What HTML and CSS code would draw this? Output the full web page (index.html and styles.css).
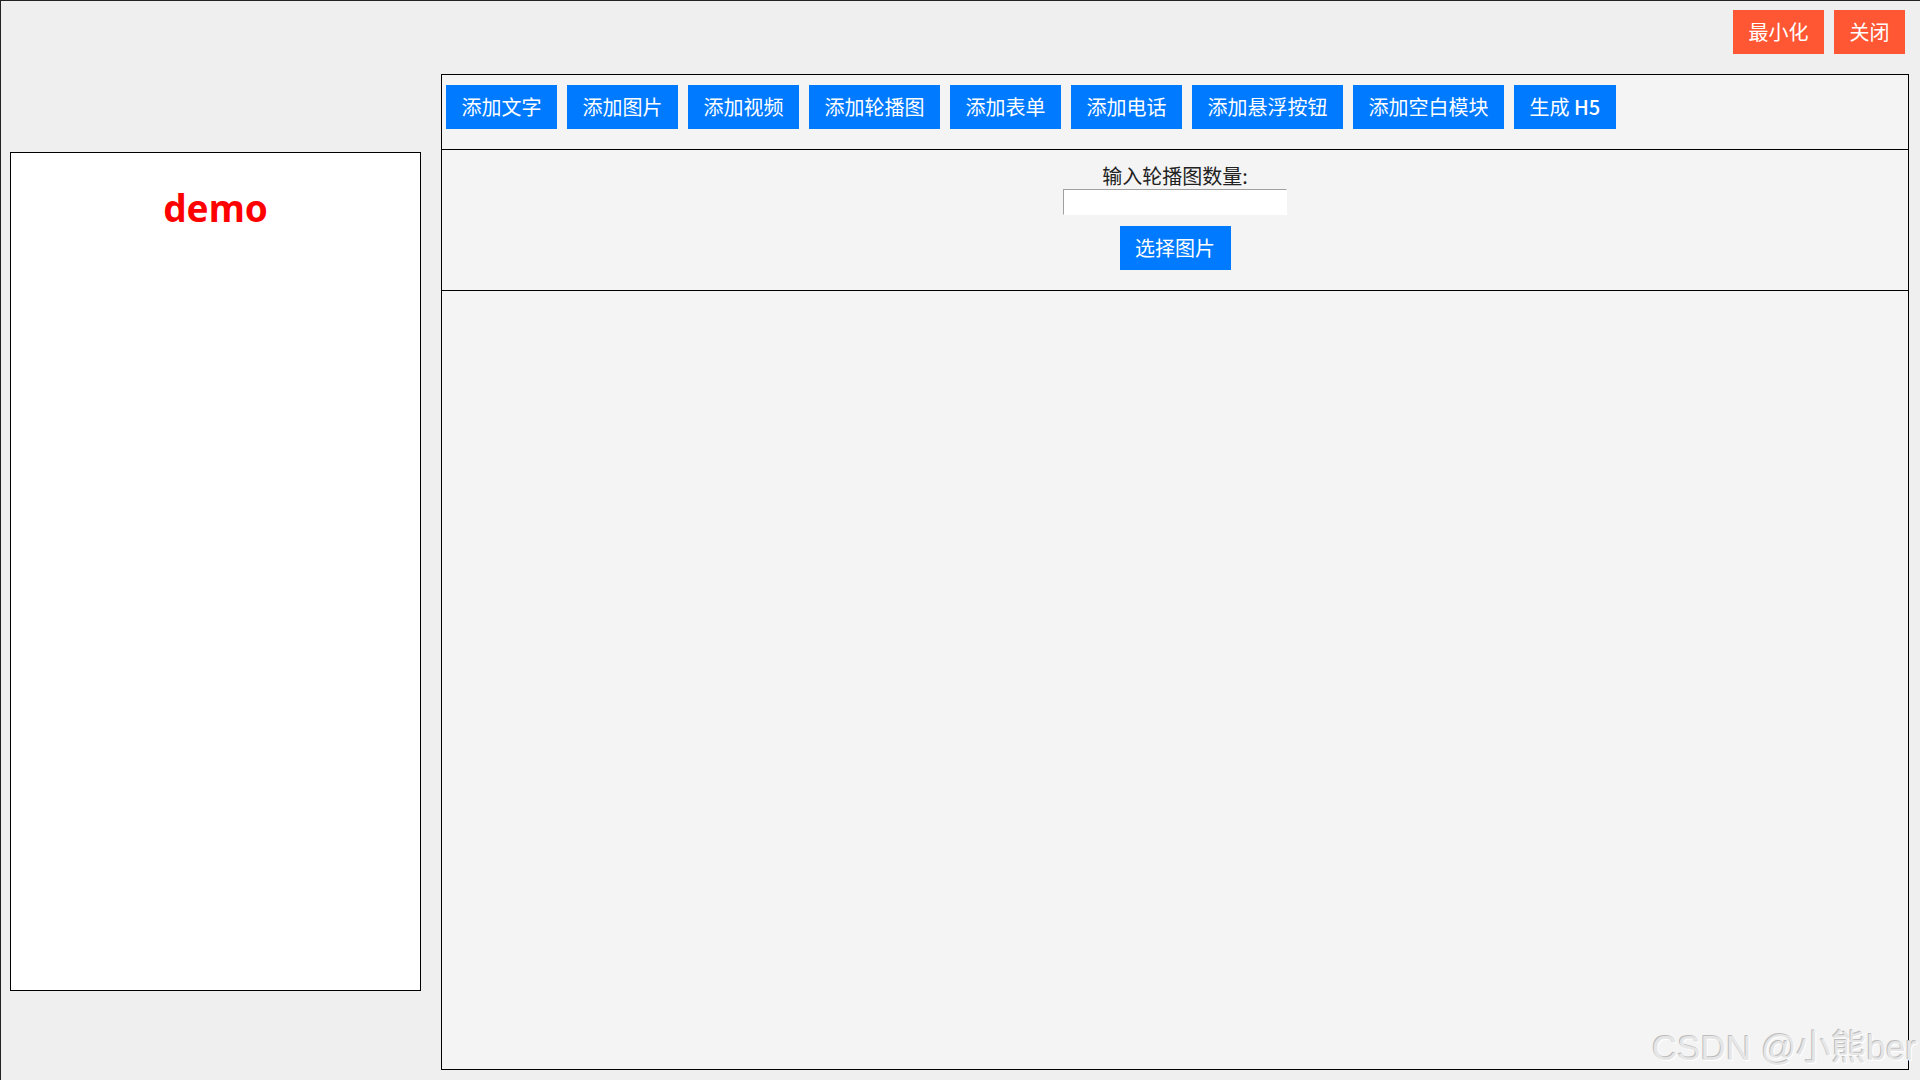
FILE: index.html
```html
<!DOCTYPE html>
<html lang="zh-CN">
<head>
  <meta charset="UTF-8">
  <meta name="viewport" content="width=device-width, initial-scale=1.0">
  <title>H5 编辑器</title>
  <link rel="stylesheet" href="styles.css">
</head>
<body>
  <div class="topbar">
    <button class="win-btn">最小化</button>
    <button class="win-btn">关闭</button>
  </div>

  <div class="workspace">
    <div class="preview">
      <h1 class="demo-title">demo</h1>
    </div>

    <div class="editor">
      <div class="toolbar">
        <button class="tool-btn">添加文字</button>
        <button class="tool-btn">添加图片</button>
        <button class="tool-btn">添加视频</button>
        <button class="tool-btn">添加轮播图</button>
        <button class="tool-btn">添加表单</button>
        <button class="tool-btn">添加电话</button>
        <button class="tool-btn">添加悬浮按钮</button>
        <button class="tool-btn">添加空白模块</button>
        <button class="tool-btn">生成 <b>H5</b></button>
      </div>

      <div class="config">
        <label for="count" class="config-label">输入轮播图数量:</label>
        <input id="count" class="config-input" type="number">
        <button class="tool-btn pick-btn">选择图片</button>
      </div>
    </div>
  </div>

  <div class="watermark">CSDN @小熊ber</div>
</body>
</html>
```

FILE: styles.css
```css
* {
  box-sizing: border-box;
}
body {
  margin: 0;
  height: 100vh;
  overflow: hidden;
  background: #efefef;
  border-top: 1px solid #222;
  border-left: 1px solid #222;
  font-family: "Noto Sans CJK SC", sans-serif;
  position: relative;
}
button {
  font-family: inherit;
  border: none;
  color: #fff;
  font-size: 20px;
  height: 44px;
  line-height: 44px;
  padding: 0 15.5px;
  cursor: pointer;
}
button b {
  font-weight: 500;
}
.topbar {
  display: flex;
  justify-content: flex-end;
  gap: 10px;
  padding: 9px 15px 0 0;
}
.win-btn {
  background: #ff5733;
}
.workspace {
  display: flex;
  align-items: flex-start;
  gap: 20px;
  margin-top: 20px;
  padding-left: 9px;
}
.preview {
  width: 411px;
  height: 839px;
  margin-top: 78px;
  background: #fff;
  border: 1px solid #000;
  padding-top: 33px;
  text-align: center;
}
.demo-title {
  margin: 0;
  color: #ff0000;
  font-family: "Noto Sans", sans-serif;
  font-weight: bold;
  font-size: 37px;
  line-height: 44px;
}
.editor {
  width: 1468px;
  height: 996px;
  background: #f4f4f4;
  border: 1px solid #000;
}
.toolbar {
  display: flex;
  gap: 10px;
  padding: 10px 4px 20px;
}
.tool-btn {
  background: #007aff;
}
.config {
  border-top: 1px solid #000;
  border-bottom: 1px solid #000;
  padding: 13px 0 20px;
  text-align: center;
}
.config-label {
  display: block;
  font-size: 20px;
  line-height: 26px;
  color: #222;
}
.config-input {
  display: block;
  margin: 0 auto;
  width: 224px;
  height: 26px;
  background: #fff;
  border: 1px solid;
  border-color: #a0a0a0 #fff #fff #a0a0a0;
  padding: 0 4px;
  font-size: 16px;
}
.pick-btn {
  margin-top: 11px;
}
.watermark {
  position: absolute;
  left: 1651px;
  top: 1027px;
  font-family: "Liberation Sans", sans-serif;
  font-size: 35px;
  line-height: 40px;
  color: #e6e6e6;
  text-shadow: -1px -1px 0 #bdbdbd, 1px 1px 0 #fff;
  white-space: nowrap;
  pointer-events: none;
}
```
